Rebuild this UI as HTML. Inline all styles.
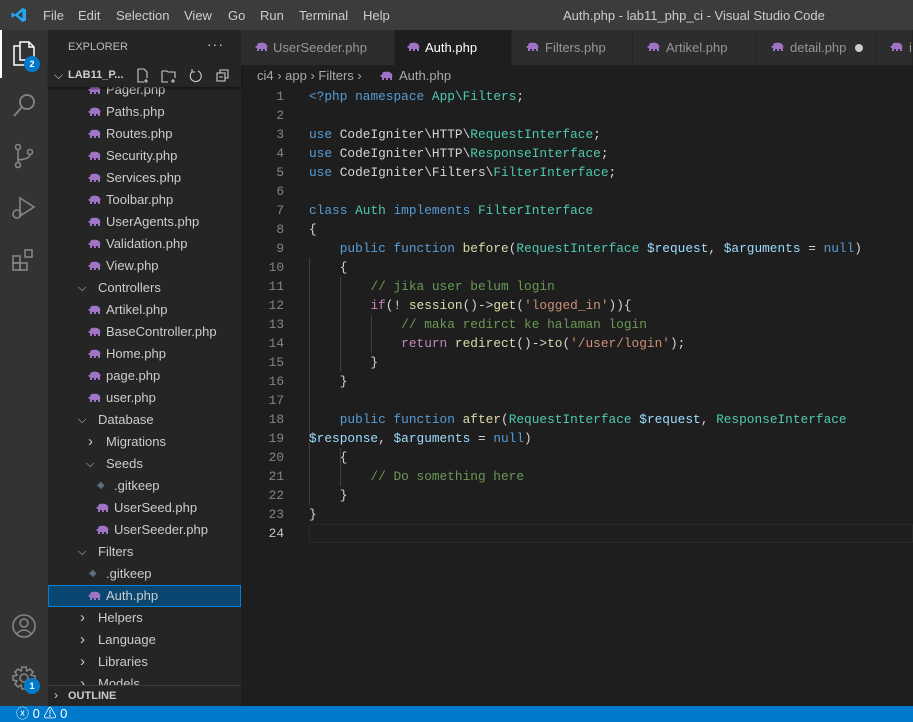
<!DOCTYPE html>
<html><head><meta charset="utf-8"><style>
*{margin:0;padding:0;box-sizing:border-box}
body{width:913px;height:722px;overflow:hidden;background:#1e1e1e;font-family:"Liberation Sans",sans-serif;font-size:13px;color:#ccc;position:relative}
.abs{position:absolute}
#title{left:0;top:0;width:913px;height:30px;background:#3c3c3c;color:#ccc}
#title span{position:absolute;top:8px;font-size:13px}
#act{left:0;top:30px;width:48px;height:676px;background:#333}
#side{left:48px;top:30px;width:193px;height:676px;background:#252526}
.row{position:absolute;left:0;width:193px;height:22px;line-height:22px;color:#ccc;font-size:13px;white-space:nowrap}
.row .t{position:absolute}
.el{position:absolute;top:6px;width:13px;height:10px}
#tabs{left:241px;top:30px;width:672px;height:35px;background:#252526}
.tab{position:absolute;top:0;height:35px;background:#2d2d2d;color:#969696;line-height:35px;font-size:13px;border-right:1px solid #252526}
.tab .el{top:12px}
#crumb{left:241px;top:65px;height:22px;line-height:22px;color:#a9a9a9;font-size:13px}
#code{left:241px;top:87px;width:672px;height:619px}
.ln{position:absolute;left:0;width:43px;text-align:right;color:#858585;font-family:"Liberation Mono",monospace;font-size:12.8px;height:19px;line-height:19px}
.cl{position:absolute;left:68px;color:#d4d4d4;font-family:"Liberation Mono",monospace;font-size:12.8px;height:19px;line-height:19px;white-space:pre}
.k{color:#569cd6}.c{color:#4ec9b0}.f{color:#dcdcaa}.v{color:#9cdcfe}.s{color:#ce9178}.m{color:#6a9955}.p{color:#c586c0}.y{color:#ffd700}
.g{position:absolute;width:1px;background:#404040}
#status{left:0;top:706px;width:913px;height:16px;background:#007acc;color:#fff;font-size:13px;line-height:16px}
</style></head><body>
<svg width="0" height="0" style="position:absolute"><defs><symbol id="e" viewBox="0 0 13 10"><path d="M2 4 Q2 0.5 6 0.8 Q9 0.3 11 2 Q13 4 12 6 L12 9 L10 9 L10 7 L8 7 L8 9 L6 9 L6 7 L4 7 L4 9 L2 9 L2 6 Q0 6 0.5 4 Z" fill="#a074c4"/></symbol></defs></svg>

<div id="title" class="abs">
<svg class="abs" style="left:11px;top:7px" width="16" height="16" viewBox="0 0 16 16"><path d="M11.5 1 L15 2.5 V13.5 L11.5 15 L4 8.5 L1.5 10.5 L0.5 10 V6 L1.5 5.5 L4 7.5 Z M11.5 4.5 L7 8 L11.5 11.5 Z" fill="#23a9f2"/></svg>
<span style="left:43px">File</span><span style="left:78px">Edit</span><span style="left:116px">Selection</span><span style="left:184px">View</span><span style="left:228px">Go</span><span style="left:260px">Run</span><span style="left:299px">Terminal</span><span style="left:363px">Help</span>
<span style="left:563px">Auth.php - lab11_php_ci - Visual Studio Code</span>
</div>

<div id="act" class="abs">
<div class="abs" style="left:0;top:0;width:2px;height:48px;background:#fff"></div>
<svg class="abs" style="left:12px;top:11px" width="24" height="26" viewBox="0 0 24 26" fill="none" stroke="#fff" stroke-width="1.5"><path d="M8 1 H17 L22 6 V19 H8 Z M17 1 V6 H22"/><path d="M8 5 H2 V24 H15 V19"/></svg>
<div class="abs" style="left:24px;top:26px;width:16px;height:16px;border-radius:8px;background:#007acc;color:#fff;font-size:9px;text-align:center;line-height:16px;font-weight:bold">2</div>
<svg class="abs" style="left:12px;top:62px" width="26" height="26" viewBox="0 0 26 26" fill="none" stroke="#858585" stroke-width="1.8"><circle cx="15" cy="10" r="7"/><path d="M10 15 L2 24"/></svg>
<svg class="abs" style="left:12px;top:113px" width="24" height="26" viewBox="0 0 24 26" fill="none" stroke="#858585" stroke-width="1.6"><circle cx="6" cy="4" r="2.5"/><circle cx="6" cy="22" r="2.5"/><circle cx="18" cy="9" r="2.5"/><path d="M6 6.5 V19.5 M18 11.5 Q18 16 6 17"/></svg>
<svg class="abs" style="left:11px;top:165px" width="26" height="26" viewBox="0 0 26 26" fill="none" stroke="#858585" stroke-width="1.6"><path d="M9 3 L23 12 L9 21 Z"/><circle cx="6" cy="19" r="4"/></svg>
<svg class="abs" style="left:11px;top:218px" width="26" height="26" viewBox="0 0 26 26" fill="none" stroke="#858585" stroke-width="1.6"><rect x="2" y="8" width="7" height="7"/><rect x="2" y="15" width="7" height="7"/><rect x="9" y="15" width="7" height="7"/><rect x="14" y="2" width="7" height="7"/></svg>
<svg class="abs" style="left:11px;top:583px" width="26" height="26" viewBox="0 0 26 26" fill="none" stroke="#858585" stroke-width="1.6"><circle cx="13" cy="13" r="11"/><circle cx="13" cy="10" r="4"/><path d="M5.5 21 Q13 13 20.5 21"/></svg>
<svg class="abs" style="left:11px;top:635px" width="26" height="26" viewBox="0 0 26 26" fill="none" stroke="#858585" stroke-width="1.6"><circle cx="13" cy="13" r="4"/><path d="M11 2 H15 L16 6 L19 4 L22 7 L20 10 L24 11 V15 L20 16 L22 19 L19 22 L16 20 L15 24 H11 L10 20 L7 22 L4 19 L6 16 L2 15 V11 L6 10 L4 7 L7 4 L10 6 Z"/></svg>
<div class="abs" style="left:24px;top:648px;width:16px;height:16px;border-radius:8px;background:#007acc;color:#fff;font-size:9px;text-align:center;line-height:16px;font-weight:bold">1</div>
</div>

<div id="side" class="abs">
<div class="abs" style="left:20px;top:11px;font-size:11px;color:#bbb">EXPLORER</div>
<div class="abs" style="left:159px;top:6px;font-size:14px;color:#ccc;letter-spacing:1px">···</div>
<div id="tree" class="abs" style="left:0;top:57px;width:193px;height:598px;overflow:hidden">
</div>
<div class="abs" style="left:0;top:35px;width:193px;height:22px;background:#252526;box-shadow:0 2px 2px rgba(0,0,0,0.45)">
<div class="abs" style="left:6px;top:3px;font-size:12px;color:#ccc">⌵</div>
<div class="abs" style="left:20px;top:4px;font-size:11px;font-weight:bold;color:#ccc">LAB11_P...</div>
<svg class="abs" style="left:88px;top:3px" width="104" height="16" viewBox="0 0 104 16" fill="none" stroke="#ccc" stroke-width="1.1"><path d="M2 1 H8 L11 4 V10 M2 1 V14 H8 M10 11 V15 M8 13 H12"/><path d="M26 3 H31 L32 4 H39 V10 M26 3 V14 H32 M37 11 V15 M35 13 H39"/><path d="M62 3 A5.5 5.5 0 1 1 56 4 M56 1 V4 H59"/><rect x="81" y="5" width="8" height="8"/><path d="M84 5 V2 H92 V10 H89 M83 9 H87"/></svg>
</div>
<div class="abs" style="left:0;top:655px;width:193px;height:21px;border-top:1px solid #3c3c3c">
<div class="abs" style="left:6px;top:2px;font-size:12px">›</div>
<div class="abs" style="left:20px;top:4px;font-size:11px;font-weight:bold">OUTLINE</div>
</div>
</div>

<div id="tabs" class="abs">
<div class="tab" style="left:0;width:154px"><svg class="el" style="left:14px"><use href="#e"/></svg><span style="position:absolute;left:32px">UserSeeder.php</span></div>
<div class="tab" style="left:154px;width:117px;background:#1e1e1e;color:#fff"><svg class="el" style="left:12px"><use href="#e"/></svg><span style="position:absolute;left:30px">Auth.php</span></div>
<div class="tab" style="left:271px;width:121px"><svg class="el" style="left:14px"><use href="#e"/></svg><span style="position:absolute;left:33px">Filters.php</span></div>
<div class="tab" style="left:392px;width:123px"><svg class="el" style="left:14px"><use href="#e"/></svg><span style="position:absolute;left:33px">Artikel.php</span></div>
<div class="tab" style="left:515px;width:120px"><svg class="el" style="left:15px"><use href="#e"/></svg><span style="position:absolute;left:34px">detail.php</span><span style="position:absolute;left:99px;top:14px;width:8px;height:8px;border-radius:4px;background:#ccc"></span></div>
<div class="tab" style="left:635px;width:37px"><svg class="el" style="left:14px"><use href="#e"/></svg><span style="position:absolute;left:33px">i</span></div>
</div>

<div id="crumb" class="abs"><span style="position:absolute;left:16px;white-space:nowrap">ci4 › app › Filters › </span><svg class="el" style="left:139px;top:6px"><use href="#e"/></svg><span style="position:absolute;left:158px;white-space:nowrap">Auth.php</span></div>

<div id="code" class="abs">
<div class="g" style="left:68px;top:171px;height:247px"></div>
<div class="g" style="left:99px;top:190px;height:95px"></div>
<div class="g" style="left:130px;top:228px;height:38px"></div>
<div class="g" style="left:99px;top:361px;height:38px"></div>
<div class="abs" style="left:68px;top:437px;width:604px;height:19px;border:1px solid #282828"></div>
</div>

<div id="status" class="abs"><span style="position:absolute;left:16px">ⓧ 0 ⚠ 0</span></div>

<script>
var tree=[["Pager.php",88,106,1],["Paths.php",88,106,1],["Routes.php",88,106,1],["Security.php",88,106,1],["Services.php",88,106,1],["Toolbar.php",88,106,1],["UserAgents.php",88,106,1],["Validation.php",88,106,1],["View.php",88,106,1],["Controllers",80,98,"v"],["Artikel.php",88,106,1],["BaseController.php",88,106,1],["Home.php",88,106,1],["page.php",88,106,1],["user.php",88,106,1],["Database",80,98,"v"],["Migrations",88,106,">"],["Seeds",88,106,"v"],[".gitkeep",96,114,"g"],["UserSeed.php",96,114,1],["UserSeeder.php",96,114,1],["Filters",80,98,"v"],[".gitkeep",88,106,"g"],["Auth.php",88,106,1],["Helpers",80,98,">"],["Language",80,98,">"],["Libraries",80,98,">"],["Models",80,98,">"]];
var h="";tree.forEach(function(r,i){var y=i*22-8;var sel=r[0]=="Auth.php";
h+='<div class="row" style="top:'+y+'px;'+(sel?'background:#094771;outline:1px solid #007fd4;outline-offset:-1px;':'')+'">';
var ix=r[1]-48;var tx=r[2]-48;
if(r[3]===1)h+='<svg class="el" style="left:'+(ix)+'px"><use href="#e"/></svg>';
else if(r[3]==="g")h+='<span class="t" style="left:'+(ix+1)+'px;color:#5a6b7b;font-size:10px">◆</span>';
else if(r[3]==="v")h+='<span class="t" style="left:'+(ix-2)+'px;font-size:11px">⌵</span>';
else h+='<span class="t" style="left:'+(ix)+'px;font-size:15px">›</span>';
h+='<span class="t" style="left:'+tx+'px">'+r[0]+'</span></div>';});
document.getElementById("tree").innerHTML=h;
var L=['<span class="k">&lt;?php</span> <span class="k">namespace</span> <span class="c">App\\Filters</span>;','',
'<span class="k">use</span> CodeIgniter\\HTTP\\<span class="c">RequestInterface</span>;',
'<span class="k">use</span> CodeIgniter\\HTTP\\<span class="c">ResponseInterface</span>;',
'<span class="k">use</span> CodeIgniter\\Filters\\<span class="c">FilterInterface</span>;','',
'<span class="k">class</span> <span class="c">Auth</span> <span class="k">implements</span> <span class="c">FilterInterface</span>',
'{',
'    <span class="k">public</span> <span class="k">function</span> <span class="f">before</span>(<span class="c">RequestInterface</span> <span class="v">$request</span>, <span class="v">$arguments</span> = <span class="k">null</span>)',
'    {',
'        <span class="m">// jika user belum login</span>',
'        <span class="p">if</span>(! <span class="f">session</span>()-&gt;<span class="f">get</span>(<span class="s">\'logged_in\'</span>)){',
'            <span class="m">// maka redirct ke halaman login</span>',
'            <span class="p">return</span> <span class="f">redirect</span>()-&gt;<span class="f">to</span>(<span class="s">\'/user/login\'</span>);',
'        }','    }','',
'    <span class="k">public</span> <span class="k">function</span> <span class="f">after</span>(<span class="c">RequestInterface</span> <span class="v">$request</span>, <span class="c">ResponseInterface</span>',
'<span class="v">$response</span>, <span class="v">$arguments</span> = <span class="k">null</span>)',
'    {','        <span class="m">// Do something here</span>','    }','}',''];
var c="";L.forEach(function(s,i){var y=i*19;c+='<div class="ln" style="top:'+y+'px'+(i==23?';color:#c6c6c6':'')+'">'+(i+1)+'</div><div class="cl" style="top:'+y+'px">'+s+'</div>';});
document.getElementById("code").insertAdjacentHTML("beforeend",c);
</script>
</body></html>
